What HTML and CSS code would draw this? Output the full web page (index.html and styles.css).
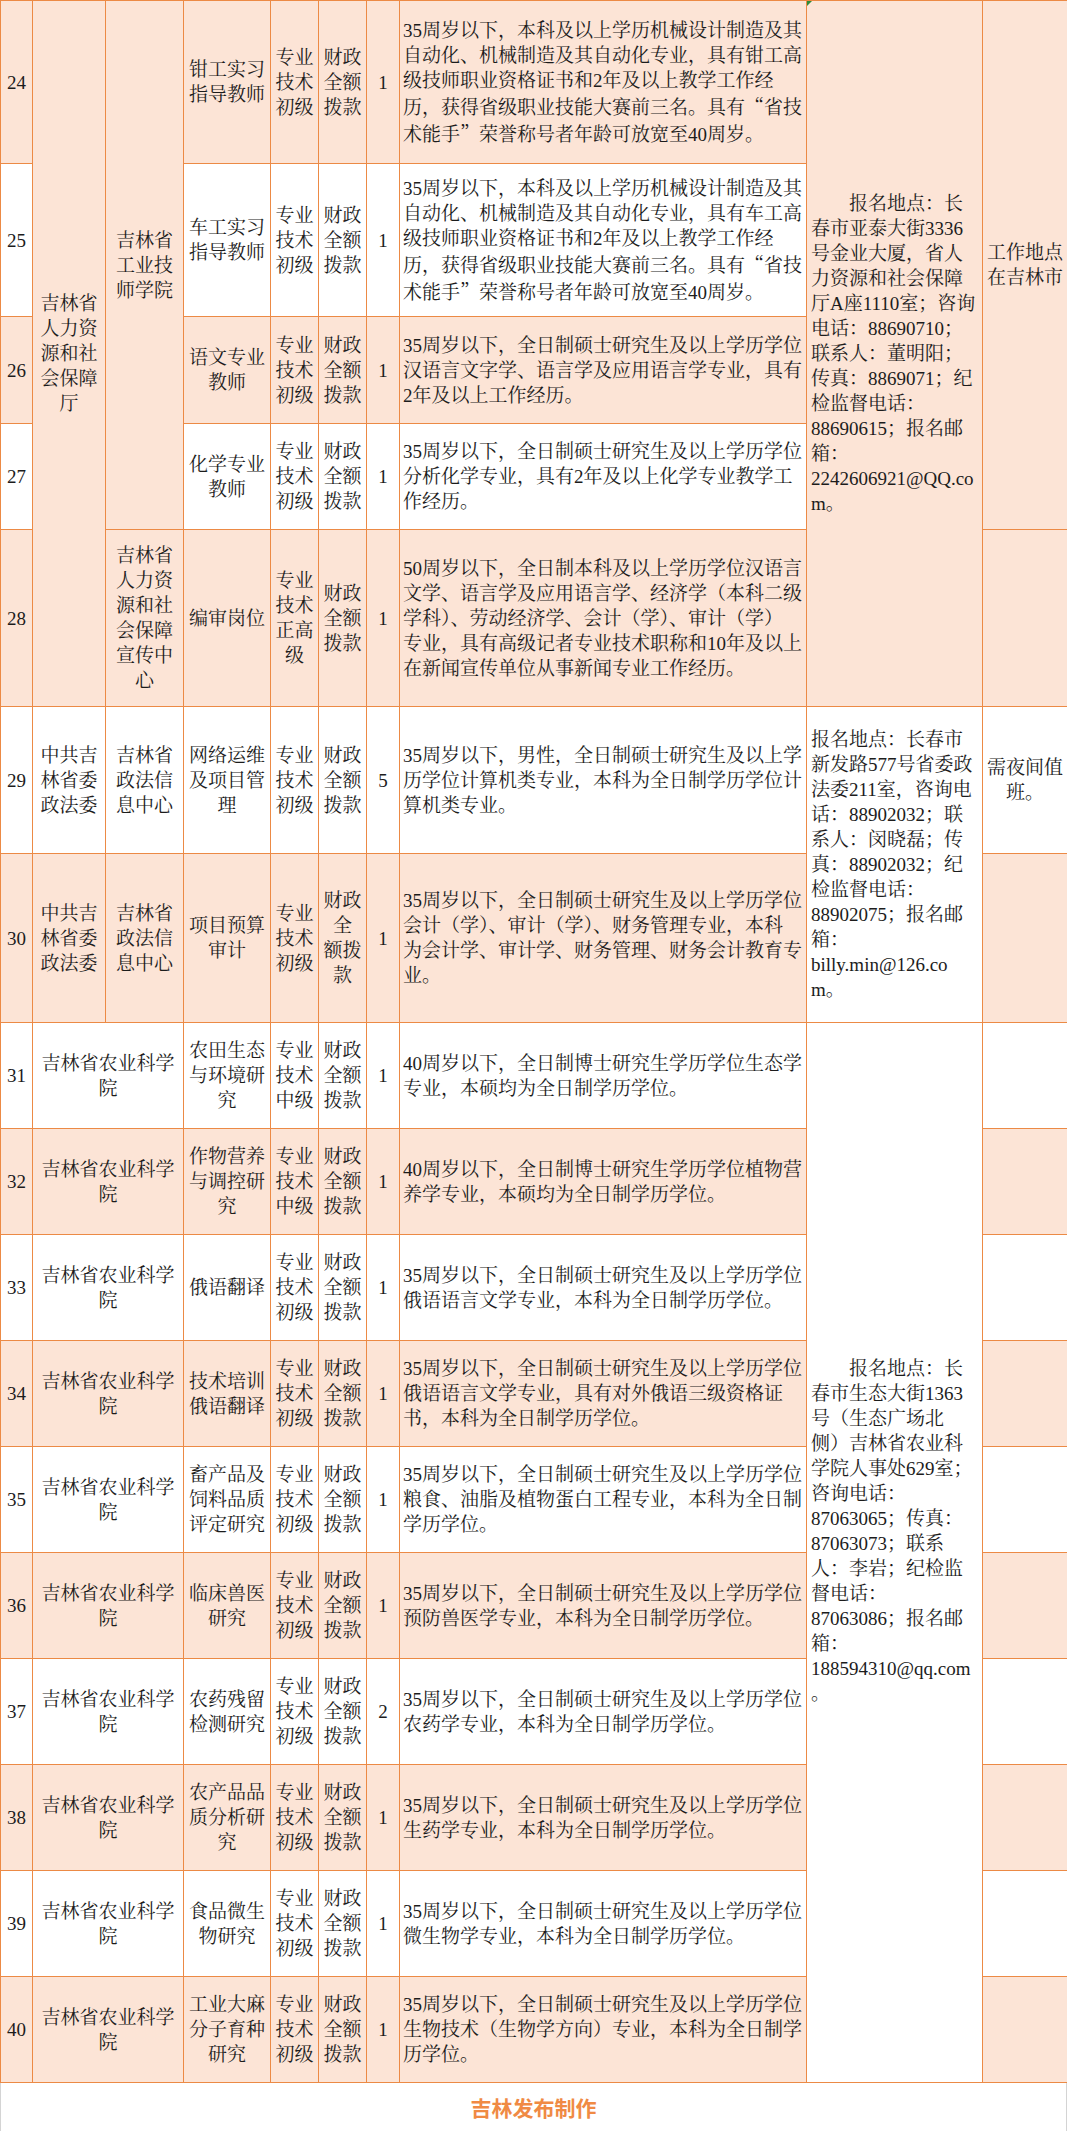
FILE: index.html
```html
<!DOCTYPE html>
<html lang="zh-CN">
<head>
<meta charset="utf-8">
<title>岗位表</title>
<link rel="stylesheet" href="styles.css">
</head>
<body>
<table class="grid">
  <colgroup>
    <col class="w-no"><col class="w-dept"><col class="w-unit"><col class="w-pos"><col class="w-type"><col class="w-fund"><col class="w-cnt"><col class="w-req"><col class="w-contact"><col class="w-note">
  </colgroup>
  <tbody>
    <tr class="alt h163">
      <td class="c">24</td>
      <td class="c fill" rowspan="5">吉林省<br>人力资<br>源和社<br>会保障<br>厅</td>
      <td class="c fill" rowspan="4">吉林省<br>工业技<br>师学院</td>
      <td class="c">钳工实习<br>指导教师</td>
      <td class="c">专业<br>技术<br>初级</td>
      <td class="c">财政<br>全额<br>拨款</td>
      <td class="c">1</td>
      <td class="req">35周岁以下，本科及以上学历机械设计制造及其<br>自动化、机械制造及其自动化专业，具有钳工高<br>级技师职业资格证书和2年及以上教学工作经<br>历，获得省级职业技能大赛前三名。具有<span class="cjk">“</span>省技<br>术能手<span class="cjk">”</span>荣誉称号者年龄可放宽至40周岁。</td>
      <td class="contact fill flag" rowspan="5">　　报名地点：长<br>春市亚泰大街3336<br>号金业大厦，省人<br>力资源和社会保障<br>厅A座1110室；咨询<br>电话：88690710；<br>联系人：董明阳；<br>传真：8869071；纪<br>检监督电话：<br>88690615；报名邮<br>箱：<br>2242606921@QQ.co<br>m。</td>
      <td class="c fill" rowspan="4">工作地点<br>在吉林市</td>
    </tr>
    <tr class="h153">
      <td class="c">25</td>
      <td class="c">车工实习<br>指导教师</td>
      <td class="c">专业<br>技术<br>初级</td>
      <td class="c">财政<br>全额<br>拨款</td>
      <td class="c">1</td>
      <td class="req">35周岁以下，本科及以上学历机械设计制造及其<br>自动化、机械制造及其自动化专业，具有车工高<br>级技师职业资格证书和2年及以上教学工作经<br>历，获得省级职业技能大赛前三名。具有<span class="cjk">“</span>省技<br>术能手<span class="cjk">”</span>荣誉称号者年龄可放宽至40周岁。</td>
    </tr>
    <tr class="alt h107">
      <td class="c">26</td>
      <td class="c">语文专业<br>教师</td>
      <td class="c">专业<br>技术<br>初级</td>
      <td class="c">财政<br>全额<br>拨款</td>
      <td class="c">1</td>
      <td class="req">35周岁以下，全日制硕士研究生及以上学历学位<br>汉语言文字学、语言学及应用语言学专业，具有<br>2年及以上工作经历。</td>
    </tr>
    <tr class="h106">
      <td class="c">27</td>
      <td class="c">化学专业<br>教师</td>
      <td class="c">专业<br>技术<br>初级</td>
      <td class="c">财政<br>全额<br>拨款</td>
      <td class="c">1</td>
      <td class="req">35周岁以下，全日制硕士研究生及以上学历学位<br>分析化学专业，具有2年及以上化学专业教学工<br>作经历。</td>
    </tr>
    <tr class="alt h177">
      <td class="c">28</td>
      <td class="c">吉林省<br>人力资<br>源和社<br>会保障<br>宣传中<br>心</td>
      <td class="c">编审岗位</td>
      <td class="c">专业<br>技术<br>正高<br>级</td>
      <td class="c">财政<br>全额<br>拨款</td>
      <td class="c">1</td>
      <td class="req">50周岁以下，全日制本科及以上学历学位汉语言<br>文学、语言学及应用语言学、经济学（本科二级<br>学科）、劳动经济学、会计（学）、审计（学）<br>专业，具有高级记者专业技术职称和10年及以上<br>在新闻宣传单位从事新闻专业工作经历。</td>
      <td></td>
    </tr>
    <tr class="h147">
      <td class="c">29</td>
      <td class="c">中共吉<br>林省委<br>政法委</td>
      <td class="c">吉林省<br>政法信<br>息中心</td>
      <td class="c">网络运维<br>及项目管<br>理</td>
      <td class="c">专业<br>技术<br>初级</td>
      <td class="c">财政<br>全额<br>拨款</td>
      <td class="c">5</td>
      <td class="req">35周岁以下，男性，全日制硕士研究生及以上学<br>历学位计算机类专业，本科为全日制学历学位计<br>算机类专业。</td>
      <td class="contact blank" rowspan="2">报名地点：长春市<br>新发路577号省委政<br>法委211室，咨询电<br>话：88902032；联<br>系人：闵晓磊；传<br>真：88902032；纪<br>检监督电话：<br>88902075；报名邮<br>箱：<br>billy.min@126.co<br>m。</td>
      <td class="c">需夜间值<br>班。</td>
    </tr>
    <tr class="alt h169">
      <td class="c">30</td>
      <td class="c">中共吉<br>林省委<br>政法委</td>
      <td class="c">吉林省<br>政法信<br>息中心</td>
      <td class="c">项目预算<br>审计</td>
      <td class="c">专业<br>技术<br>初级</td>
      <td class="c">财政<br>全<br>额拨<br>款</td>
      <td class="c">1</td>
      <td class="req">35周岁以下，全日制硕士研究生及以上学历学位<br>会计（学）、审计（学）、财务管理专业，本科<br>为会计学、审计学、财务管理、财务会计教育专<br>业。</td>
      <td></td>
    </tr>
    <tr class="h106">
      <td class="c">31</td>
      <td class="c" colspan="2">吉林省农业科学<br>院</td>
      <td class="c">农田生态<br>与环境研<br>究</td>
      <td class="c">专业<br>技术<br>中级</td>
      <td class="c">财政<br>全额<br>拨款</td>
      <td class="c">1</td>
      <td class="req">40周岁以下，全日制博士研究生学历学位生态学<br>专业，本硕均为全日制学历学位。</td>
      <td class="contact blank lift" rowspan="10">　　报名地点：长<br>春市生态大街1363<br>号（生态广场北<br>侧）吉林省农业科<br>学院人事处629室；<br>咨询电话：<br>87063065；传真：<br>87063073；联系<br>人：李岩；纪检监<br>督电话：<br>87063086；报名邮<br>箱：<br>188594310@qq.com<br>。</td>
      <td></td>
    </tr>
    <tr class="alt h106">
      <td class="c">32</td>
      <td class="c" colspan="2">吉林省农业科学<br>院</td>
      <td class="c">作物营养<br>与调控研<br>究</td>
      <td class="c">专业<br>技术<br>中级</td>
      <td class="c">财政<br>全额<br>拨款</td>
      <td class="c">1</td>
      <td class="req">40周岁以下，全日制博士研究生学历学位植物营<br>养学专业，本硕均为全日制学历学位。</td>
      <td></td>
    </tr>
    <tr class="h106">
      <td class="c">33</td>
      <td class="c" colspan="2">吉林省农业科学<br>院</td>
      <td class="c">俄语翻译</td>
      <td class="c">专业<br>技术<br>初级</td>
      <td class="c">财政<br>全额<br>拨款</td>
      <td class="c">1</td>
      <td class="req">35周岁以下，全日制硕士研究生及以上学历学位<br>俄语语言文学专业，本科为全日制学历学位。</td>
      <td></td>
    </tr>
    <tr class="alt h106">
      <td class="c">34</td>
      <td class="c" colspan="2">吉林省农业科学<br>院</td>
      <td class="c">技术培训<br>俄语翻译</td>
      <td class="c">专业<br>技术<br>初级</td>
      <td class="c">财政<br>全额<br>拨款</td>
      <td class="c">1</td>
      <td class="req">35周岁以下，全日制硕士研究生及以上学历学位<br>俄语语言文学专业，具有对外俄语三级资格证<br>书，本科为全日制学历学位。</td>
      <td></td>
    </tr>
    <tr class="h106">
      <td class="c">35</td>
      <td class="c" colspan="2">吉林省农业科学<br>院</td>
      <td class="c">畜产品及<br>饲料品质<br>评定研究</td>
      <td class="c">专业<br>技术<br>初级</td>
      <td class="c">财政<br>全额<br>拨款</td>
      <td class="c">1</td>
      <td class="req">35周岁以下，全日制硕士研究生及以上学历学位<br>粮食、油脂及植物蛋白工程专业，本科为全日制<br>学历学位。</td>
      <td></td>
    </tr>
    <tr class="alt h106">
      <td class="c">36</td>
      <td class="c" colspan="2">吉林省农业科学<br>院</td>
      <td class="c">临床兽医<br>研究</td>
      <td class="c">专业<br>技术<br>初级</td>
      <td class="c">财政<br>全额<br>拨款</td>
      <td class="c">1</td>
      <td class="req">35周岁以下，全日制硕士研究生及以上学历学位<br>预防兽医学专业，本科为全日制学历学位。</td>
      <td></td>
    </tr>
    <tr class="h106">
      <td class="c">37</td>
      <td class="c" colspan="2">吉林省农业科学<br>院</td>
      <td class="c">农药残留<br>检测研究</td>
      <td class="c">专业<br>技术<br>初级</td>
      <td class="c">财政<br>全额<br>拨款</td>
      <td class="c">2</td>
      <td class="req">35周岁以下，全日制硕士研究生及以上学历学位<br>农药学专业，本科为全日制学历学位。</td>
      <td></td>
    </tr>
    <tr class="alt h106">
      <td class="c">38</td>
      <td class="c" colspan="2">吉林省农业科学<br>院</td>
      <td class="c">农产品品<br>质分析研<br>究</td>
      <td class="c">专业<br>技术<br>初级</td>
      <td class="c">财政<br>全额<br>拨款</td>
      <td class="c">1</td>
      <td class="req">35周岁以下，全日制硕士研究生及以上学历学位<br>生药学专业，本科为全日制学历学位。</td>
      <td></td>
    </tr>
    <tr class="h106">
      <td class="c">39</td>
      <td class="c" colspan="2">吉林省农业科学<br>院</td>
      <td class="c">食品微生<br>物研究</td>
      <td class="c">专业<br>技术<br>初级</td>
      <td class="c">财政<br>全额<br>拨款</td>
      <td class="c">1</td>
      <td class="req">35周岁以下，全日制硕士研究生及以上学历学位<br>微生物学专业，本科为全日制学历学位。</td>
      <td></td>
    </tr>
    <tr class="alt h106">
      <td class="c">40</td>
      <td class="c" colspan="2">吉林省农业科学<br>院</td>
      <td class="c">工业大麻<br>分子育种<br>研究</td>
      <td class="c">专业<br>技术<br>初级</td>
      <td class="c">财政<br>全额<br>拨款</td>
      <td class="c">1</td>
      <td class="req">35周岁以下，全日制硕士研究生及以上学历学位<br>生物技术（生物学方向）专业，本科为全日制学<br>历学位。</td>
      <td></td>
    </tr>
  </tbody>
</table>
<div class="footer">吉林发布制作</div>
</body>
</html>
```

FILE: styles.css
```css
html, body {
  margin: 0;
  padding: 0;
  background: #ffffff;
}

body {
  width: 1067px;
  font-family: "Liberation Serif", "Noto Serif CJK SC", "Noto Sans CJK SC", serif;
  color: #1c1c1c;
}

.grid {
  width: 1067px;
  border-collapse: collapse;
  table-layout: fixed;
  font-size: 19px;
  line-height: 25px;
}

.w-no { width: 32px; }
.w-dept { width: 73px; }
.w-unit { width: 78px; }
.w-pos { width: 87px; }
.w-type { width: 48px; }
.w-fund { width: 48px; }
.w-cnt { width: 33px; }
.w-req { width: 407px; }
.w-contact { width: 176px; }
.w-note { width: 85px; }

.grid td {
  border: 1px solid #ec8a45;
  padding: 0 2px;
  vertical-align: middle;
  white-space: nowrap;
  overflow: visible;
  background: #ffffff;
}

.grid tr.alt td,
.grid td.fill {
  background: #fce4d6;
}

.grid td.blank {
  background: #ffffff;
}

.h163 { height: 163px; }
.h153 { height: 153px; }
.h107 { height: 107px; }
.h106 { height: 106px; }
.h177 { height: 177px; }
.h147 { height: 147px; }
.h169 { height: 169px; }

.c {
  text-align: center;
}

.grid td.req {
  text-align: left;
  padding-left: 3px;
}

.grid td.contact {
  text-align: left;
  padding-left: 4px;
}

.grid td.lift {
  padding-bottom: 44px;
}

.cjk {
  font-family: "Noto Serif CJK SC", "Noto Sans CJK SC", sans-serif;
}

.flag {
  position: relative;
}

.flag::before {
  content: "";
  position: absolute;
  left: 0;
  top: 0;
  width: 0;
  height: 0;
  border-top: 5px solid #2e8b3a;
  border-right: 5px solid transparent;
}

.footer {
  box-sizing: border-box;
  height: 49px;
  border: 1px solid #d4d4d4;
  border-top: none;
  display: flex;
  align-items: center;
  justify-content: center;
  font-family: "Noto Sans CJK SC", sans-serif;
  font-weight: bold;
  font-size: 21px;
  color: #f08a44;
}
```
